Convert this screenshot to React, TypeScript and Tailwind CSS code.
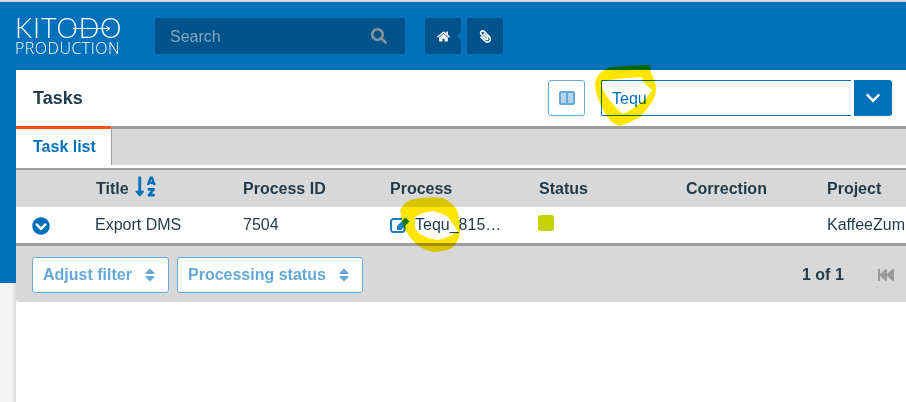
import { FaHome, FaPaperclip, FaSearch, FaChevronDown, FaChevronCircleDown, FaSortAlphaDown, FaSort, FaFastBackward } from "react-icons/fa";

const cols = [
  { label: "Process ID", w: "w-[147px]" },
  { label: "Process", w: "w-[149px]" },
  { label: "Status", w: "w-[147px]" },
  { label: "Correction", w: "w-[141px]" },
  { label: "Project", w: "w-[120px]" },
];

function Logo() {
  return (
    <div className="relative w-[106px] h-[42px] text-white">
      <div className="absolute left-0 top-0 text-[27px] leading-[20px] tracking-[0.9px] font-light whitespace-nowrap font-['Lato',sans-serif]">
        KITODO
      </div>
      <svg className="absolute left-0 top-0" width="106" height="30" viewBox="0 0 106 30" fill="none" stroke="white" strokeWidth="1">
        <path d="M58 10.5 H95 M91 8.5 L95 10.5 L91 13" />
      </svg>
      <div className="absolute left-0 top-[21px] text-[16px] leading-[18px] tracking-[0.5px] whitespace-nowrap font-['Open_Sans',sans-serif] font-light">
        PRODUCTION
      </div>
    </div>
  );
}

function Highlights() {
  return (
    <svg className="absolute left-0 top-0 mix-blend-multiply pointer-events-none" width="906" height="402" viewBox="0 0 906 402">
      <path
        fillRule="evenodd"
        fill="#ffe600"
        d="M595 84 Q596 77 600 73 Q606 68 613 67 Q632 65 650 65 L651 73 Q656 81 656 90 Q656 95 653 100 Q648 109 640 117 Q630 123 620 126 Q614 125 610 120 Q603 112 600 103 Q596 96 595 84 Z M602 81 Q622 78 642 77 L643 82 L652 90 Q648 97 642 102 Q633 109 623 114 Q617 110 612 103 Q605 95 602 87 Z"
      />
      <path
        fillRule="evenodd"
        fill="#ffe600"
        d="M400 210 Q404 203 410 200 Q426 196 443 198 Q452 202 457 210 Q461 222 460 233 Q458 243 452 248 Q443 252 433 252 Q424 250 417 245 Q410 238 405 230 Q401 220 400 210 Z M415 217 Q423 212 433 211 Q442 213 448 217 L452 223 L458 231 Q453 235 447 237 Q442 240 437 240 Q429 239 422 235 Q416 232 415 227 Z"
      />
    </svg>
  );
}

function EditIcon() {
  return (
    <svg width="20" height="17" viewBox="0 0 20 17" className="mr-[5px] mt-[1px] shrink-0">
      <path d="M12 2 H3.5 a2.5 2.5 0 0 0 -2.5 2.5 V12.5 a2.5 2.5 0 0 0 2.5 2.5 H12 a2.5 2.5 0 0 0 2.5 -2.5 V9" fill="none" stroke="#1e7fc4" strokeWidth="2" />
      <path d="M7 9 L15.5 0.5 L19.5 4.5 L11 13 L7 13 Z" fill="#1e7fc4" />
    </svg>
  );
}

export default function App() {
  return (
    <div className="relative w-[906px] h-[402px] overflow-hidden flex flex-col border-t-2 border-[#d4d6d8] bg-white font-['Liberation_Sans',Arial,sans-serif] text-[16px] text-[#1f3a4a]">
      <header className="h-[68px] shrink-0 bg-[#0170bb] flex items-start pt-[16px] pl-[15px]">
        <Logo />
        <div className="ml-[34px] w-[250px] h-[36px] rounded-[3px] bg-[#00528a] flex items-center justify-between pl-[15px] pr-[18px]">
          <span className="text-[#82a7c2] pt-[2px]">Search</span>
          <FaSearch className="text-[#8a9399] text-[16px]" />
        </div>
        <div className="ml-[20px] flex items-center relative">
          <div className="w-[36px] h-[36px] rounded-[3px] bg-[#00528a] flex items-center justify-center">
            <FaHome className="text-white text-[13px]" />
          </div>
          <div className="w-[36px] h-[36px] ml-[6px] rounded-[3px] bg-[#00528a] flex items-center justify-center">
            <FaPaperclip className="text-white text-[13px] -scale-x-100" />
          </div>
          <div className="absolute left-[32px] top-[12px] w-0 h-0 border-y-[6px] border-y-transparent border-r-[6px] border-r-[#0170bb]" />
        </div>
      </header>

      <div className="flex flex-1 min-h-0">
        <div className="w-[16px] shrink-0 flex flex-col">
          <div className="h-[213px] bg-[#0170bb]" />
          <div className="flex-1 bg-gradient-to-r from-[#f4f4f4] from-70% to-[#dddddd]" />
        </div>

        <main className="flex-1 min-w-0 rounded-tl-[3px] overflow-hidden bg-white">
          <section className="h-[56px] flex items-start relative">
            <h1 className="absolute left-[17px] top-[17px] font-bold text-[18px] leading-[22px] text-[#1f3a4a]">Tasks</h1>
            <div className="ml-[532px] mt-[10px] flex">
              <button className="w-[37px] h-[36px] rounded-[3px] border border-[#64ace0] flex items-center justify-center">
                <svg width="16" height="14" viewBox="0 0 16 14" fill="#b5d6ee" stroke="#64a9d8" strokeWidth="2">
                  <rect x="1" y="1" width="14" height="12" rx="1" />
                  <path d="M8 1 V13" />
                </svg>
              </button>
              <div className="ml-[16px] w-[250px] h-[36px] border-y border-l border-[#0170bb] rounded-l-[2px] pl-[10px] pt-[1px] flex items-center text-[#0170bb]">
                Tequ
              </div>
              <button className="ml-[3px] w-[38px] h-[36px] rounded-r-[3px] bg-[#0170bb] flex items-center justify-center">
                <FaChevronDown className="text-white text-[16px]" />
              </button>
            </div>
          </section>

          <div className="h-[3px] bg-[#9e9e9e] flex">
            <div className="w-[95px] bg-[#ff4f12]" />
          </div>

          <div className="h-[36px] bg-[#d8d8d8] flex">
            <div className="w-[96px] h-full bg-white border-r-[1px] border-[#9e9e9e] flex items-center pl-[17px] font-bold text-[#0170bb]">
              Task list
            </div>
          </div>
          <div className="h-[3px] bg-white" />
          <div className="h-[2px] bg-[#9e9e9e]" />

          <div className="h-[37px] bg-[#d8d8d8] flex items-center font-bold whitespace-nowrap">
            <div className="w-[80px] shrink-0" />
            <div className="w-[147px] shrink-0 flex items-center gap-[5px]">
              Title
              <FaSortAlphaDown className="text-[#0170bb] text-[23px] -mt-[5px]" />
            </div>
            {cols.map((c) => (
              <div key={c.label} className={`${c.w} shrink-0`}>{c.label}</div>
            ))}
          </div>

          <div className="h-[36px] bg-white flex items-center whitespace-nowrap">
            <div className="w-[79px] shrink-0 pl-[16px]">
              <FaChevronCircleDown className="text-[#0170bb] text-[18px] mt-[1px]" />
            </div>
            <div className="w-[148px] shrink-0">Export DMS</div>
            <div className="w-[147px] shrink-0">7504</div>
            <div className="w-[149px] shrink-0 flex items-center">
              <EditIcon />
              <span>Tequ_815…</span>
            </div>
            <div className="w-[147px] shrink-0">
              <div className="w-[16px] h-[16px] rounded-[3px] bg-[#c6d200] mb-[5px] -ml-px" />
            </div>
            <div className="w-[141px] shrink-0" />
            <div className="w-[120px] shrink-0 overflow-hidden">KaffeeZum</div>
          </div>

          <div className="h-[3px] bg-[#9e9e9e]" />

          <div className="h-[56px] bg-[#d8d8d8] flex items-center pl-[16px] pt-[2px] rounded-bl-[3px] relative">
            <button className="h-[36px] w-[137px] bg-white rounded-[3px] border border-[#64ace0] flex items-center justify-between pl-[10px] pr-[10px] font-bold text-[#64a9d8]">
              Adjust filter
              <FaSort className="text-[#64a9d8] text-[16px]" />
            </button>
            <button className="ml-[8px] h-[36px] w-[186px] bg-white rounded-[3px] border border-[#64ace0] flex items-center justify-between pl-[10px] pr-[10px] font-bold text-[#64a9d8]">
              Processing status
              <FaSort className="text-[#64a9d8] text-[16px]" />
            </button>
            <span className="ml-[439px] font-bold whitespace-nowrap">1 of 1</span>
            <FaFastBackward className="ml-[34px] text-[#9a9a9a] text-[16px]" />
          </div>
        </main>
      </div>
      <div className="absolute left-0 top-[-2px]"><Highlights /></div>
    </div>
  );
}
